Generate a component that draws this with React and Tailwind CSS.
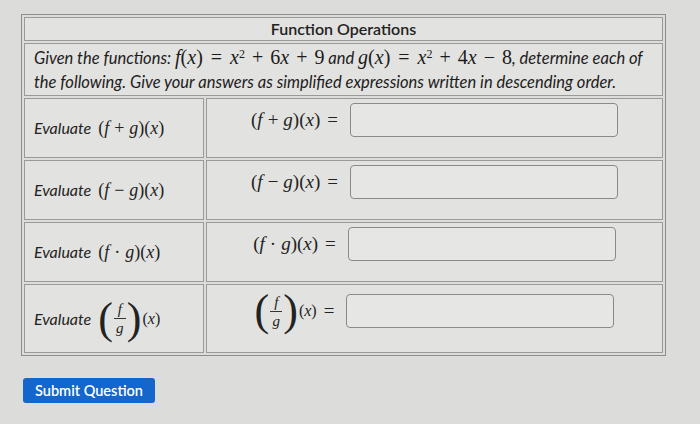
import React from 'react';

const ui = { fontFamily: 'Lato, "Open Sans", sans-serif' };
const tex = { fontFamily: '"Liberation Serif", "DejaVu Serif", serif' };

const V = ({ children }) => <span className="italic">{children}</span>;
const Op = ({ children, w = 'mx-[5px]' }) => <span className={w}>{children}</span>;

const Frac = () => (
  <span className="inline-flex items-center align-middle" style={tex}>
    <span className="text-[44px] leading-none font-light inline-block">(</span>
    <span className="inline-flex flex-col items-center mx-[1px] text-[15px] leading-[16px]">
      <span className="italic px-[1px]">f</span>
      <span className="h-px w-[12px] bg-[#333] my-[1px]" />
      <span className="italic px-[1px]">g</span>
    </span>
    <span className="text-[44px] leading-none font-light inline-block">)</span>
  </span>
);

const Expr = ({ op, size = 'text-[19px]' }) => {
  if (op === '/') {
    return (
      <span className="inline-flex items-center" style={tex}>
        <Frac />
        <span className="text-[16px] ml-[1px]">(<V>x</V>)</span>
      </span>
    );
  }
  return (
    <span className={size} style={tex}>
      (<V>f</V>
      {op === '·' ? <span className="mx-[5px]">·</span> : <Op>{op}</Op>}
      <V>g</V>)(<V>x</V>)
    </span>
  );
};

const rows = [
  { op: '+', h: 'h-[60px]' },
  { op: '−', h: 'h-[60px]' },
  { op: '·', h: 'h-[60px]' },
  { op: '/', h: 'h-[69px]' },
];

export default function App() {
  return (
    <div className="w-[700px] h-[424px] bg-[#dcdcda] text-[#222] pt-[14px] pl-[21px]" style={ui}>
      <table className="w-[645px] border-separate border-spacing-[2px] border border-[#8d8d8b]">
        <tbody>
          <tr>
            <td colSpan={2} className="h-[24px] border border-[#9a9a98] bg-[#e2e2e0] text-center text-[16px] font-semibold leading-none">
              Function Operations
            </td>
          </tr>
          <tr>
            <td colSpan={2} className="h-[53px] border border-[#9a9a98] bg-[#e2e2e0] pl-[9px] pr-[4px] text-[16.5px] italic leading-[24px] text-[#1c1c1c] whitespace-nowrap">
              Given the functions:{' '}
              <span className="not-italic text-[20px]" style={tex}>
                <V>f</V>(<V>x</V>)<Op w="mx-[8px]">=</Op><V>x</V><sup className="text-[12px]">2</sup><Op w="mx-[7px]">+</Op>6<V>x</V><Op w="mx-[7px]">+</Op>9
              </span>{' '}
              and{' '}
              <span className="not-italic text-[20px]" style={tex}>
                <V>g</V>(<V>x</V>)<Op w="mx-[8px]">=</Op><V>x</V><sup className="text-[12px]">2</sup><Op w="mx-[7px]">+</Op>4<V>x</V><Op w="mx-[7px]">−</Op>8
              </span>
              , determine each of
              <br />
              the following. Give your answers as simplified expressions written in descending order.
            </td>
          </tr>
          {rows.map((r) => (
            <tr key={r.op}>
              <td className={`${r.h} w-[180px] border border-[#9a9a98] bg-[#e2e2e0] pl-[9px] text-[16px] italic`}>
                <span className="inline-flex items-center gap-[7px]">
                  Evaluate <span className="not-italic"><Expr op={r.op} size="text-[18px]" /></span>
                </span>
              </td>
              <td className={`${r.h} border border-[#9a9a98] bg-[#e2e2e0] align-top pt-[4px]`}>
                <div className="flex items-center justify-center gap-[12px]">
                  <span className="inline-flex items-center">
                    <Expr op={r.op} />
                    <span className="ml-[7px] text-[19px]" style={tex}>=</span>
                  </span>
                  <div className="w-[268px] h-[34px] rounded-[4px] border border-[#8a8a88] bg-[#e6e6e4]" />
                </div>
              </td>
            </tr>
          ))}
        </tbody>
      </table>
      <button className="mt-[22px] ml-[2px] h-[25px] w-[132px] rounded-[3px] bg-[#1466cc] text-white text-[14.5px] font-semibold">
        Submit Question
      </button>
    </div>
  );
}
